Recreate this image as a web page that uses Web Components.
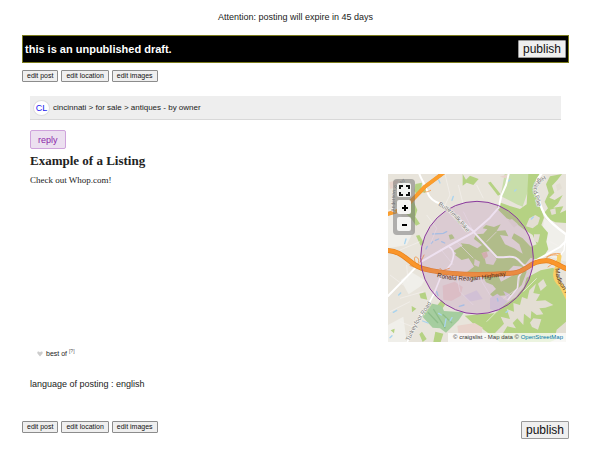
<!DOCTYPE html>
<html lang="en">
<head>
<meta charset="utf-8">
<title>Example of a Listing</title>
<style>
    body {
        margin: 0;
        background: #fff;
        color: #222;
        font: 9px/12px "Liberation Sans", Arial, sans-serif;
    }
</style>
</head>
<body>
<draft-page></draft-page>

<script>
class PublishButton extends HTMLElement {
    connectedCallback() {
        const shadow = this.attachShadow({ mode: 'open' });
        shadow.innerHTML = `
            <style>
                :host { display: block; }
                button {
                    display: block;
                    box-sizing: border-box;
                    height: 18px;
                    margin: 0;
                    padding: 0 4px;
                    border: 1px solid #999;
                    border-radius: 1px;
                    background: #efefef;
                    color: #111;
                    font: 12px/14px "Liberation Sans", Arial, sans-serif;
                }
            </style>
            <button type="button"><slot></slot></button>
        `;
    }
}
customElements.define("publish-button", PublishButton);

class EditButtons extends HTMLElement {
    connectedCallback() {
        const shadow = this.attachShadow({ mode: 'open' });
        shadow.innerHTML = `
            <style>
                :host { display: flex; gap: 3px; }
                button {
                    box-sizing: border-box;
                    height: 12px;
                    margin: 0;
                    padding: 0 4px;
                    border: 1px solid #8c8c8c;
                    border-radius: 1px;
                    background: #efefef;
                    color: #111;
                    font: 7px/10px "Liberation Sans", Arial, sans-serif;
                }
            </style>
            <button type="button">edit post</button>
            <button type="button">edit location</button>
            <button type="button">edit images</button>
        `;
    }
}
customElements.define("edit-buttons", EditButtons);

class DraftBanner extends HTMLElement {
    connectedCallback() {
        const shadow = this.attachShadow({ mode: 'open' });
        shadow.innerHTML = `
            <style>
                :host {
                    display: flex;
                    align-items: center;
                    justify-content: space-between;
                    box-sizing: border-box;
                    min-height: 28px;
                    padding: 0 2px;
                    border: 1px solid #7c7c1c;
                    background: #000;
                    color: #fff;
                }
                strong { font-size: 11px; }
            </style>
            <strong><slot></slot></strong>
            <publish-button>publish</publish-button>
        `;
    }
}
customElements.define("draft-banner", DraftBanner);

class BreadCrumbs extends HTMLElement {
    connectedCallback() {
        const shadow = this.attachShadow({ mode: 'open' });
        shadow.innerHTML = `
            <style>
                :host {
                    display: flex;
                    align-items: center;
                    gap: 3px;
                    box-sizing: border-box;
                    height: 24px;
                    padding: 0 3px;
                    border-bottom: 1px solid #d8d8d8;
                    background: #eee;
                    font-size: 8px;
                }
                .logo {
                    box-sizing: border-box;
                    width: 17px;
                    height: 16px;
                    border: 1px solid #ddd;
                    border-radius: 50%;
                    background: #fff;
                    color: #1a1aee;
                    font-size: 9px;
                    line-height: 14px;
                    text-align: center;
                    text-decoration: none;
                }
            </style>
            <a class="logo" href="#">CL</a>
            <span><slot></slot></span>
        `;
    }
}
customElements.define("bread-crumbs", BreadCrumbs);

class AreaMap extends HTMLElement {
    connectedCallback() {
        const shadow = this.attachShadow({ mode: 'open' });
        shadow.innerHTML = `
            <style>
                :host { display: block; position: relative; overflow: hidden; }
                svg { display: block; width: 100%; height: auto; }
                .controls {
                    position: absolute;
                    top: 5px;
                    left: 5px;
                    display: flex;
                    flex-direction: column;
                    gap: 3px;
                    padding: 4px;
                    border-radius: 4px;
                    background: rgba(110, 110, 110, 0.5);
                }
                .controls button {
                    display: flex;
                    align-items: center;
                    justify-content: center;
                    width: 14px;
                    height: 14px;
                    margin: 0;
                    padding: 0;
                    border: 0;
                    border-radius: 2px;
                    background: #f4f4f2;
                }
                .controls svg { width: 11px; height: 11px; }
                .credit {
                    position: absolute;
                    right: 0;
                    bottom: 0;
                    padding: 0 3px 0 5px;
                    background: rgba(255, 255, 255, 0.75);
                    color: #333;
                    font-size: 6px;
                    line-height: 9px;
                    white-space: nowrap;
                }
                a { color: #0078a8; text-decoration: none; }
            </style>
            <svg viewBox="24 27 534 504" font-family="Liberation Sans, Arial, sans-serif">
                <rect x="24" y="27" width="534" height="504" fill="#e8e4db"/>

                <!-- pale built-up blocks -->
                <g fill="#f0efea">
                    <path d="M24 135L60 120 70 190 100 200 80 240 24 250z"/>
                    <path d="M62 345L95 322 134 345 124 362 86 388z"/>
                    <path d="M492 160L558 205 558 290 480 265z"/>
                    <path d="M24 480L70 455 80 531 24 531z"/>
                </g>

                <!-- woods and parks -->
                <path fill="#c8deaa" d="M374 27H450L445 75 428 125 410 118 362 93z"/>
                <g fill="#b5d283">
                    <path d="M445 27H478L470 60 474 92 484 132 492 158 484 180 504 203 499 230 505 253 492 273 470 285 452 278 430 305 400 302 372 330 350 322 363 350 405 328 430 302 440 320 425 360 395 390 360 392 344 400 330 388 348 372 338 360 318 352 306 330 280 338 262 320 282 305 266 280 245 285 225 270 240 250 258 254 242 235 268 238 292 250 306 240 282 222 288 208 310 206 322 193 308 190 318 180 342 186 362 178 350 198 376 196 385 214 360 210 375 238 402 250 428 266 418 238 395 220 402 205 428 220 452 245 470 238 458 210 430 192 402 170 380 160 350 130 358 112 392 124 420 132 440 118z"/>
                    <path d="M510 34L546 27 532 45 516 62 523 83 508 98 524 105 548 90 534 116 520 128 550 124 540 144 558 136 558 174 526 172 500 160 492 144 504 130 494 110 506 84 498 58z"/>
                    <path d="M440 338L482 316 520 308 540 345 548 382 558 398 558 511 510 531 360 531 305 490 280 476 254 452 300 448 344 445 362 428 408 395 432 365z"/>
                    <path d="M106 57L126 53 124 73 145 70 134 84 115 78 112 93 103 78z"/>
                    <path d="M70 118L100 108 112 135 106 155 120 176 108 182 92 158 76 145z"/>
                    <path d="M108 212L118 210 132 234 122 242zM220 147L236 154 240 180 228 165zM220 258L250 240 272 272 250 280zM95 423L109 431 96 442zM118 386L136 382 142 404 122 400zM32 496L44 491 42 505zM118 508L126 500 140 522 128 531zM166 500L190 506 182 531 160 531zM248 27L258 44 270 32 296 42 280 60 260 53 248 62z"/>
                    <path d="M170 423L184 406 196 418 184 436zM324 53L332 50 362 88 354 92zM206 210L216 208 224 220 210 224zM270 330L286 334 278 346z"/>
                </g>

                <!-- clearings inside the woods -->
                <g fill="#e3ded3">
                    <path d="M448 160L466 150 480 158 474 178 458 190 438 184zM462 208L480 208 474 233 462 228zM384 166L396 162 414 178 402 188zM442 214L454 225 450 238zM310 262L330 258 350 282 340 300 318 296zM284 282L300 290 296 306 282 300z"/>
                    <path d="M345 504L372 476 362 455 390 462 380 432 402 440 400 414 420 420 426 396 442 402 448 376 468 356 460 384 480 388 468 408 496 406 520 420 496 428 478 430 490 448 470 450 454 438 452 462 432 446 430 480 412 460 398 474 408 490 382 484 366 510z"/>
                    <path d="M474 356L490 342 500 362 482 378zM450 473L460 460 484 463 474 494 456 486zM530 494L558 470 558 531 524 520z"/>
                    <path d="M528 60L540 54 546 70 532 78zM510 134L526 130 528 146 515 150z"/>
                </g>

                <!-- golf course -->
                <path fill="#a5cd9f" d="M126 454L148 414 185 422 192 438 252 442 236 466 198 503 180 490 158 488z"/>
                <path fill="none" stroke="#8ebd89" stroke-width="4" d="M144 442L174 474M160 432L196 490M188 448L216 474"/>

                <!-- soft pink land -->
                <g fill="#e8d3cb">
                    <path d="M188 362L224 350 248 366 242 392 214 408 190 404z"/>
                    <path d="M232 482L284 474 308 488 302 518 236 512zM28 52L56 44 52 66 30 72zM360 35L386 27 378 40z"/>
                    <path d="M304 264L320 260 324 274 312 282z" fill="#dfc0b0"/>
                </g>
                <path fill="#dcd7de" d="M330 400L352 386 382 410 352 440 330 432zM370 378L390 388 382 403zM252 392L290 376 308 402 268 410z"/>

                <!-- ponds and creeks -->
                <g fill="none" stroke="#a9d4ef" stroke-width="4" stroke-linecap="round">
                    <path d="M176 45L180 54M216 106L220 94M78 222L74 236M152 236L158 230M138 252L142 244M158 207L190 205 200 200M166 226L176 222M185 230L194 234M128 468L144 474M176 445L184 450M198 462L194 484M210 468L216 458M238 424L252 420M352 400L354 408M378 442L384 438M386 48L390 44M404 78L408 74M454 162L460 156M56 390L62 384M40 442L50 436M30 518L36 512M170 380L174 392"/>
                </g>

                <!-- side streets -->
                <g fill="none" stroke="#f5f2ee" stroke-width="2">
                    <path d="M120 27L130 60M60 84L110 92M195 27L210 90 190 130M235 60L250 120M290 60L310 100M60 255L120 230M140 150L170 190 150 240M180 250L220 300M230 230L280 280M320 230L350 200M250 140L280 200M80 300L84 350M30 330L70 360M60 400L130 380M30 440L90 410M230 330L240 380 280 420M300 340L330 390M510 230L550 250M500 290L530 270M470 340L430 380M60 470L110 490M320 470L350 440M420 330L414 370 370 400"/>
                </g>

                <!-- white roads -->
                <g fill="none" stroke="#fff" stroke-linecap="round" stroke-linejoin="round">
                    <path stroke-width="6" d="M118 27C126 50 140 62 142 82C148 98 160 110 182 116L232 158 282 200"/>
                    <path stroke-width="6" d="M386 27L378 60 364 92 356 128 330 158 280 202 200 246 124 290 64 352 24 393"/>
                    <path stroke-width="6" d="M280 200L350 276C376 280 388 270 406 278C424 288 424 300 438 304L468 286 540 246 558 228"/>
                    <path stroke-width="7" d="M484 27C462 50 466 80 476 102C488 150 500 164 558 208"/>
                    <path stroke-width="5" d="M208 246C226 258 222 274 214 296L182 336 162 386 142 424 104 482 82 531"/>
                    <path stroke-width="4" d="M558 208L552 256 530 285M438 305L415 336 412 370 384 404"/>
                </g>

                <!-- motorways -->
                <g fill="none" stroke-linecap="round">
                    <g stroke="#f0a462" stroke-width="3">
                        <path d="M88 286C94 312 110 318 132 270M90 302C118 314 124 276 106 276C98 276 110 316 126 316M140 58C120 76 132 88 152 76M174 322L208 310M208 340L180 310M494 286C504 272 512 264 538 266M500 276C530 260 550 276 536 292M504 306L540 280M540 266L534 300"/>
                    </g>
                    <path stroke="#f3982f" stroke-width="12" d="M20 148L54 138 88 114 134 66 190 24"/>
                    <path stroke="#fb9e2d" stroke-width="9" d="M20 148L54 138 88 114 134 66 190 24"/>
                    <path stroke="#f8cf67" stroke-width="13" d="M538 274L534 300C520 326 524 346 544 362L564 402"/>
                    <path stroke="#e6801c" stroke-width="15" d="M20 256C80 258 86 308 150 316C230 332 320 330 400 324C442 320 450 286 500 287C522 288 538 304 564 313"/>
                    <path stroke="#fa962b" stroke-width="11" d="M20 256C80 258 86 308 150 316C230 332 320 330 400 324C442 320 450 286 500 287C522 288 538 304 564 313"/>
                </g>

                <circle cx="291" cy="278" r="169" fill="#a05aaa" fill-opacity="0.18" stroke="#8a399d" stroke-width="3"/>

                <!-- road names -->
                <defs>
                    <path id="anderson" d="M46 140L46 80Q54 48 130 30"/>
                    <path id="buttermilk" d="M174 120L208 142 232 168 290 236"/>
                    <path id="highland" d="M494 32Q458 48 460 78L482 160"/>
                    <path id="reagan" d="M170 336Q235 352 300 344Q350 338 420 322"/>
                    <path id="turkeyfoot" d="M88 529L112 478 180 376"/>
                    <path id="madison" d="M526 310Q528 344 540 360L590 440"/>
                </defs>
                <g font-size="18" fill="#777" stroke="#f4f2ed" stroke-width="3" paint-order="stroke">
                    <text font-size="15"><textPath href="#anderson">Anderson Road</textPath></text>
                    <text><textPath href="#buttermilk">Buttermilk Pike</textPath></text>
                    <text><textPath href="#highland">Highland Pike</textPath></text>
                    <text><textPath href="#turkeyfoot">Turkeyfoot Road</textPath></text>
                </g>
                <g fill="#4b2c1b">
                    <text font-size="19"><textPath href="#reagan">Ronald Reagan Highway</textPath></text>
                    <text font-size="19"><textPath href="#madison">Madison Pike</textPath></text>
                </g>
            </svg>
            <div class="controls">
                <button type="button" aria-label="full screen">
                    <svg viewBox="0 0 11 11"><path fill="none" stroke="#111" stroke-width="2" d="M1 4V1H4M7 1H10V4M10 7V10H7M4 10H1V7"/></svg>
                </button>
                <button type="button" aria-label="zoom in">
                    <svg viewBox="0 0 11 11"><path fill="none" stroke="#000" stroke-width="2" d="M3 6H9M6 3V9"/></svg>
                </button>
                <button type="button" aria-label="zoom out">
                    <svg viewBox="0 0 11 11"><path fill="none" stroke="#000" stroke-width="2" d="M3 6H8"/></svg>
                </button>
            </div>
            <div class="credit">© craigslist - Map data © <a href="#">OpenStreetMap</a></div>
        `;
    }
}
customElements.define("area-map", AreaMap);

class BestOf extends HTMLElement {
    connectedCallback() {
        const shadow = this.attachShadow({ mode: 'open' });
        shadow.innerHTML = `
            <style>
                :host {
                    display: flex;
                    align-items: center;
                    gap: 3px;
                    font-size: 7px;
                }
                svg { width: 6px; height: 6px; }
                a { color: inherit; text-decoration: none; }
                sup { font-size: 5px; line-height: 0; color: #555; }
            </style>
            <svg viewBox="0 0 12 12"><path fill="#ccc" d="M6 11L1 5C-1 1 4-1 6 3C8-1 13 1 11 5z"/></svg>
            <span><a href="#">best of</a> <sup><a href="#">[?]</a></sup></span>
        `;
    }
}
customElements.define("best-of", BestOf);

class ListingPost extends HTMLElement {
    connectedCallback() {
        const shadow = this.attachShadow({ mode: 'open' });
        shadow.innerHTML = `
            <style>
                :host { display: block; }
                .reply {
                    display: block;
                    height: 19px;
                    margin: 0;
                    padding: 0 7px;
                    border: 1px solid #cfa3dc;
                    border-radius: 2px;
                    background: #ece0f0;
                    color: #8b1fa9;
                    font: 9px/12px "Liberation Sans", Arial, sans-serif;
                }
                h1 {
                    margin: 4px 0 0;
                    font: bold 13px/16px "Liberation Serif", "Times New Roman", serif;
                }
                .row {
                    display: flex;
                    justify-content: space-between;
                    align-items: flex-start;
                    margin-top: 5px;
                }
                p {
                    margin: 0;
                    font: 9px/12px "Liberation Serif", "Times New Roman", serif;
                }
                area-map { flex: 0 0 178px; }
                best-of { margin: 6px 0 0 7px; }
                .language {
                    margin-top: 18px;
                    font: 9px/12px "Liberation Sans", Arial, sans-serif;
                }
            </style>
            <button class="reply" type="button">reply</button>
            <h1><slot name="title"></slot></h1>
            <div class="row">
                <p><slot></slot></p>
                <area-map></area-map>
            </div>
            <best-of></best-of>
            <p class="language"><slot name="language"></slot></p>
        `;
    }
}
customElements.define("listing-post", ListingPost);

class DraftPage extends HTMLElement {
    connectedCallback() {
        const shadow = this.attachShadow({ mode: 'open' });
        shadow.innerHTML = `
            <style>
                :host { display: block; padding: 11px 31px 18px 22px; }
                .notice { margin: 0 0 12px; text-align: center; }
                edit-buttons { margin-top: 7px; }
                bread-crumbs { margin: 14px 8px 10px; }
                listing-post { margin: 0 3px 31px 8px; }
                footer {
                    display: flex;
                    justify-content: space-between;
                    align-items: flex-start;
                }
                footer edit-buttons { margin: 0; }
            </style>
            <p class="notice">Attention: posting will expire in 45 days</p>
            <draft-banner>this is an unpublished draft.</draft-banner>
            <edit-buttons></edit-buttons>
            <bread-crumbs>cincinnati &gt; for sale &gt; antiques - by owner</bread-crumbs>
            <listing-post>
                <span slot="title">Example of a Listing</span>
                Check out Whop.com!
                <span slot="language">language of posting : english</span>
            </listing-post>
            <footer>
                <edit-buttons></edit-buttons>
                <publish-button>publish</publish-button>
            </footer>
        `;
    }
}
customElements.define("draft-page", DraftPage);
</script>
</body>
</html>
